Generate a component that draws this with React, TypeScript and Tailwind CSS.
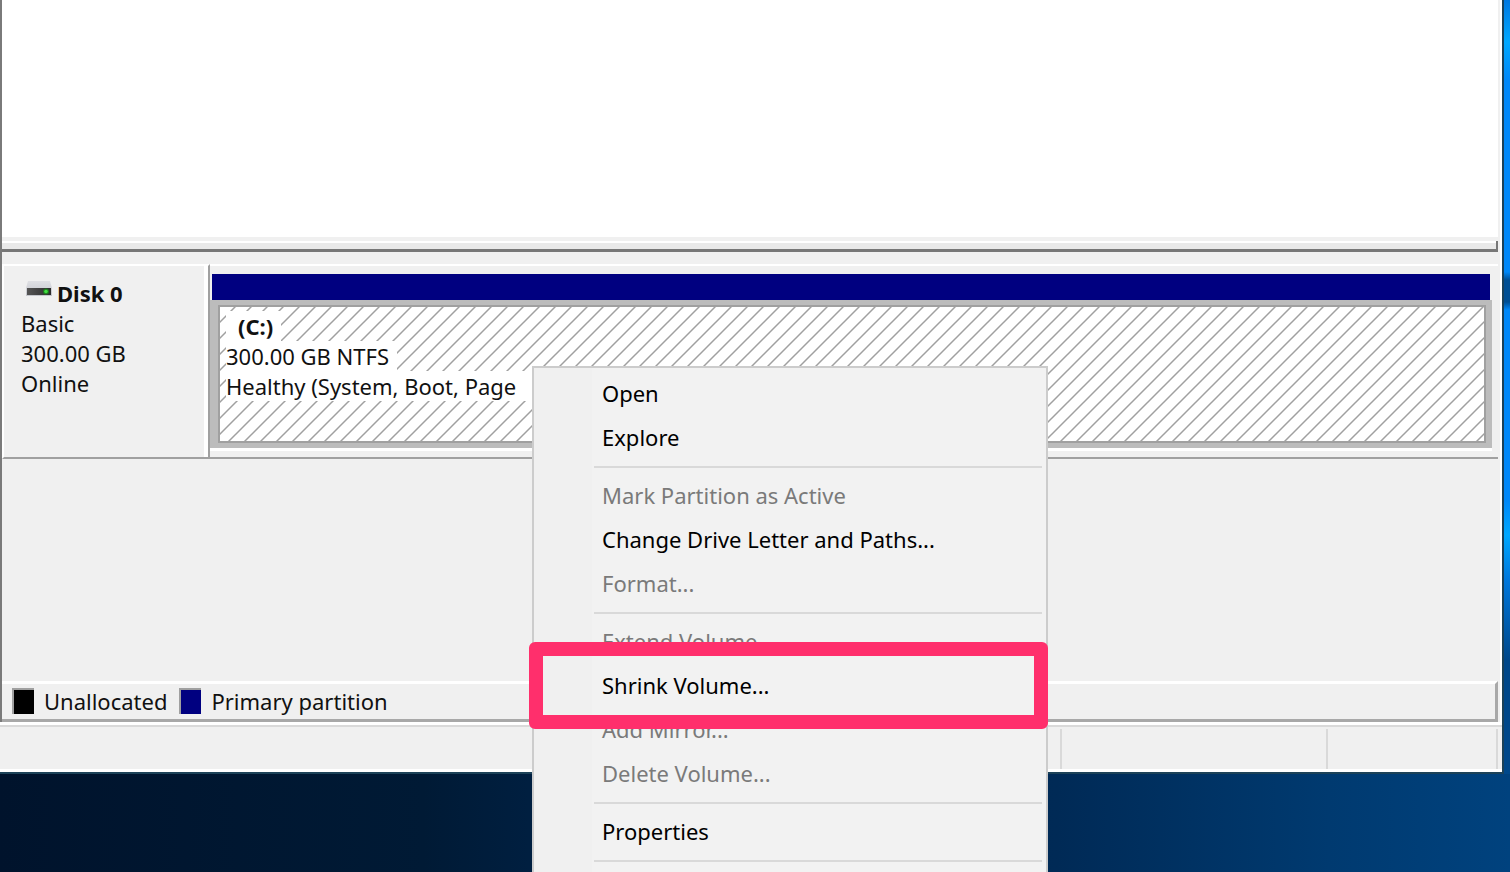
import React from 'react';

interface MenuEntry {
  label?: string;
  disabled?: boolean;
  highlighted?: boolean;
}

const menuEntries: MenuEntry[] = [
  { label: 'Open' },
  { label: 'Explore' },
  {},
  { label: 'Mark Partition as Active', disabled: true },
  { label: 'Change Drive Letter and Paths...' },
  { label: 'Format...', disabled: true },
  {},
  { label: 'Extend Volume...', disabled: true },
  { label: 'Shrink Volume...', highlighted: true },
  { label: 'Add Mirror...', disabled: true },
  { label: 'Delete Volume...', disabled: true },
  {},
  { label: 'Properties' },
  {},
];

const DriveIcon: React.FC = () => (
  <svg width="28" height="18" viewBox="0 0 28 18" aria-hidden="true">
    <defs>
      <linearGradient id="lid" x1="0" y1="0" x2="0" y2="1">
        <stop offset="0" stopColor="#dfe0e4" />
        <stop offset="1" stopColor="#c4c6cc" />
      </linearGradient>
      <linearGradient id="front" x1="0" y1="0" x2="1" y2="0">
        <stop offset="0" stopColor="#555" />
        <stop offset="1" stopColor="#2c2c2c" />
      </linearGradient>
    </defs>
    <path d="M3 1h22l2 7v8H1V8z" fill="url(#lid)" />
    <rect x="2" y="8" width="24" height="7" fill="url(#front)" />
    <circle cx="21" cy="11.5" r="3" fill="#1f7a1f" />
    <circle cx="21" cy="11.5" r="1.8" fill="#3fe03f" />
  </svg>
);

const DiskHeader: React.FC = () => (
  <div className="w-[208px] shrink-0 border-2 border-t-white border-r-[#a0a0a0] border-b-[#a0a0a0] border-l-white">
    <div className="h-full border-r-4 border-white pt-3 pl-[17px]">
      <div className="flex items-center font-bold">
        <span className="mr-1 ml-1 -translate-y-1">
          <DriveIcon />
        </span>
        Disk 0
      </div>
      <p>Basic</p>
      <p>300.00 GB</p>
      <p>Online</p>
    </div>
  </div>
);

const Partition: React.FC = () => (
  <div className="flex min-w-0 flex-1 flex-col border-t-2 border-b-2 border-t-white border-b-[#a0a0a0] pt-2 pb-1.5">
    <div className="mr-2 ml-0.5 h-[26px] bg-[#000080]" />
    <div className="mr-1.5 flex flex-1 border-b-3 border-white">
      <div className="flex-1 bg-[#bcbcbc] py-[5px] pr-[6px] pl-[8px]">
        <div className="relative h-full border-2 border-[#a0a0a0] bg-white">
          <svg className="absolute inset-0 h-full w-full" aria-hidden="true">
            <defs>
              <pattern id="hatch" width="16" height="16" patternUnits="userSpaceOnUse">
                <path d="M-2 17L17 -2M13 18L18 13M-2 1L1 -2" stroke="#a0a0a0" strokeWidth="1.5" />
              </pattern>
            </defs>
            <rect width="100%" height="100%" fill="url(#hatch)" />
          </svg>
          <div className="relative flex flex-col items-start pt-1 pl-1.5">
            <span className="bg-white pr-2 pl-3 font-bold">(C:)</span>
            <span className="bg-white pr-2">300.00 GB NTFS</span>
            <span className="bg-white pr-6">Healthy (System, Boot, Page</span>
          </div>
        </div>
      </div>
    </div>
  </div>
);

const Legend: React.FC = () => (
  <div className="flex h-[41px] items-center gap-3 border-t-3 border-r-3 border-b-3 border-t-white border-r-[#a8a8a8] border-b-[#a8a8a8] pb-0.5 pl-2.5">
    <div className="flex items-center gap-2.5">
      <span className="h-[26px] w-[22px] border-t-2 border-l-2 border-[#a0a0a0] bg-black" />
      <span>Unallocated</span>
    </div>
    <div className="flex items-center gap-2.5">
      <span className="h-[26px] w-[22px] border-t-2 border-l-2 border-[#a0a0a0] bg-[#000080]" />
      <span>Primary partition</span>
    </div>
  </div>
);

const StatusBar: React.FC = () => (
  <div className="flex h-[50px] border-t-3 border-b-3 border-white bg-[#f0f0f0]">
    <div className="flex flex-1 border-t-2 border-[#d9d9d9] pt-0.5 pr-1">
      <div className="flex-1 border-r-2 border-[#d9d9d9]" />
      <div className="w-[266px] border-r-2 border-[#d9d9d9]" />
      <div className="w-[170px] border-r-2 border-[#d9d9d9]" />
    </div>
  </div>
);

const ContextMenu: React.FC = () => (
  <ul
    role="menu"
    className="absolute top-[366px] left-[532px] w-[516px] border-2 border-[#cccccc] bg-[linear-gradient(to_right,#f0f0f0_58px,#f2f2f2_58px)] pt-1 pb-16"
  >
    {menuEntries.map((entry, i) =>
      entry.label ? (
        <li key={i} role="none" className="relative">
          <button
            type="button"
            role="menuitem"
            disabled={entry.disabled}
            className="block h-11 w-full pb-0.5 pl-[68px] text-left text-black disabled:text-[#7a7a7a]"
          >
            {entry.label}
          </button>
          {entry.highlighted && (
            <div className="pointer-events-none absolute -top-[22px] -right-[2px] -bottom-[21px] -left-[5px] z-10 rounded-md border-14 border-[#ff2f6c]" />
          )}
        </li>
      ) : (
        <li key={i} role="separator" className="flex h-3.5 items-center pr-1 pl-[60px]">
          <div className="h-0.5 flex-1 bg-[#d9d9d9]" />
        </li>
      )
    )}
  </ul>
);

const App: React.FC = () => {
  return (
    <div className="relative flex h-screen flex-col overflow-hidden bg-[linear-gradient(to_right,#00132c,#001a35_28%,#001f40_35%,#002a56_70%,#003a70_88%,#00427e)] font-['Noto_Sans','Open_Sans',sans-serif] text-[22px] leading-[30px] text-[#111]">
      <div className="flex min-h-0 flex-1 bg-[linear-gradient(to_bottom,#0078e0,#00a8ff_42px,#0088f8_80px,#0088f8_272px,#004f94_280px,#004f94_302px,#0088f8_310px,#0088f8_500px,#00a8ff_535px,#0078dc_580px,#00488a_660px)]">
        <main className="flex min-w-0 flex-1 flex-col border-r-2 border-b-2 border-[#1c4258] bg-[#f0f0f0]">
          <div className="flex flex-1 border-r-2 border-white">
            <div className="mr-0.5 flex flex-1 flex-col border-l-2 border-[#7a7a7a]">
              <div className="flex-1 bg-white" />
              <div className="h-1 bg-[#f0f0f0]" />
              <div className="h-[11px] border-r-2 border-b-3 border-[#777] bg-[#e9e9e9]">
                <div className="h-0.5 bg-white" />
              </div>
              <div className="mt-3 flex h-[195px]">
                <DiskHeader />
                <Partition />
              </div>
              <div className="h-[222px]" />
              <Legend />
            </div>
          </div>
          <StatusBar />
        </main>
        <div className="w-1.5" />
      </div>
      <div className="h-[98px] shrink-0" />
      <ContextMenu />
    </div>
  );
};

export default App;
